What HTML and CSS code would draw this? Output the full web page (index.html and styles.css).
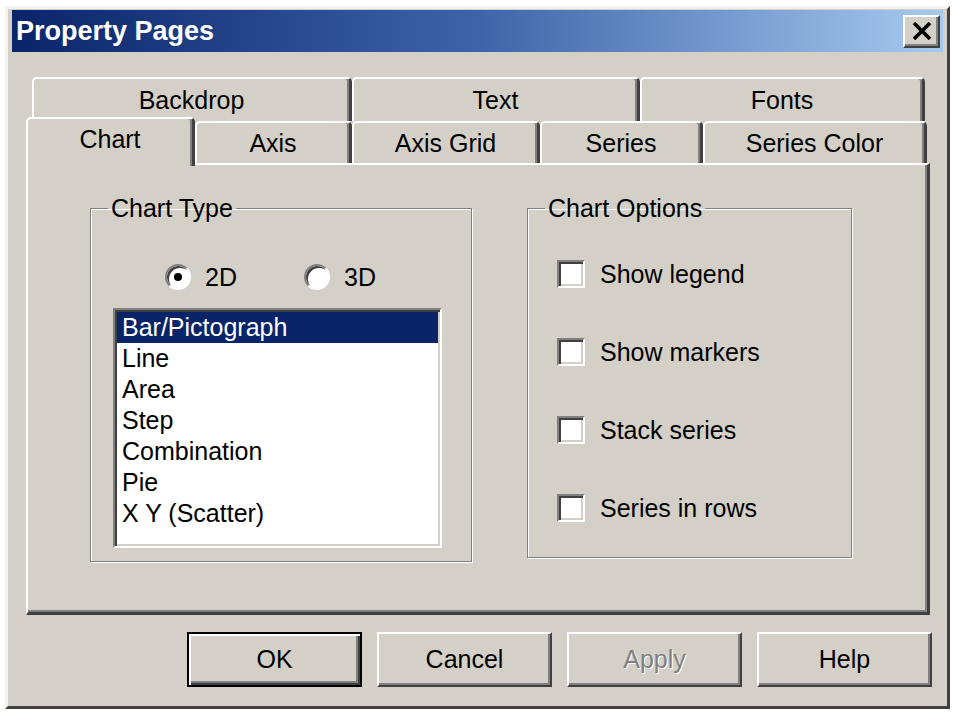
FILE: index.html
```html
<!DOCTYPE html>
<html lang="en">
<head>
    <meta charset="UTF-8">
    <title>Property Pages</title>
    <link rel="stylesheet" href="styles.css">
</head>
<body>
    <div class="window">
        <div class="titlebar">
            <span class="title">Property Pages</span>
            <button class="close" type="button">
                <svg width="20" height="18" viewBox="0 0 20 18">
                    <path d="M2 1 L18 17 M18 1 L2 17" stroke="#000" stroke-width="3.6" fill="none"/>
                </svg>
            </button>
        </div>

        <div class="tabs">
            <div class="tab-row back">
                <div class="tab w-backdrop">Backdrop</div>
                <div class="tab w-text">Text</div>
                <div class="tab w-fonts">Fonts</div>
            </div>
            <div class="tab-row front">
                <div class="tab active w-chart">Chart</div>
                <div class="tab w-axis">Axis</div>
                <div class="tab w-grid">Axis Grid</div>
                <div class="tab w-series">Series</div>
                <div class="tab w-color">Series Color</div>
            </div>
        </div>

        <div class="panel">
            <fieldset class="group group-type">
                <legend>Chart Type</legend>
                <div class="radios">
                    <label class="radio first"><span class="circle"><span class="dot"></span></span>2D</label>
                    <label class="radio"><span class="circle"></span>3D</label>
                </div>
                <div class="listbox">
                    <div class="item selected">Bar/Pictograph</div>
                    <div class="item">Line</div>
                    <div class="item">Area</div>
                    <div class="item">Step</div>
                    <div class="item">Combination</div>
                    <div class="item">Pie</div>
                    <div class="item">X Y (Scatter)</div>
                </div>
            </fieldset>

            <fieldset class="group group-options">
                <legend>Chart Options</legend>
                <div class="checks">
                    <label class="check"><span class="box"></span>Show legend</label>
                    <label class="check"><span class="box"></span>Show markers</label>
                    <label class="check"><span class="box"></span>Stack series</label>
                    <label class="check"><span class="box"></span>Series in rows</label>
                </div>
            </fieldset>
        </div>

        <div class="buttons">
            <button class="btn default" type="button">OK</button>
            <button class="btn" type="button">Cancel</button>
            <button class="btn disabled" type="button">Apply</button>
            <button class="btn" type="button">Help</button>
        </div>
    </div>
</body>
</html>
```

FILE: styles.css
```css
* {
    box-sizing: border-box;
}

body {
    margin: 0;
    background-color: #fff;
    font-family: "Liberation Sans", Arial, sans-serif;
    font-size: 25px;
    color: #000;
}

.window {
    margin: 6px 0 0 5px;
    width: 945px;
    height: 703px;
    background-color: #d4d0c8;
    border: 3px solid;
    border-color: #f4f2ee #404040 #404040 #f4f2ee;
    padding: 1px 4px 0 4px;
    display: flex;
    flex-direction: column;
}

/* title bar */
.titlebar {
    height: 42px;
    flex-shrink: 0;
    display: flex;
    align-items: center;
    justify-content: space-between;
    padding: 0 3px 0 4px;
    background: linear-gradient(to right, #0a246a 0%, #3d64a8 50%, #a6caf0 100%);
}

.title {
    color: #fff;
    font-weight: bold;
    font-size: 27px;
}

.close {
    width: 37px;
    height: 33px;
    padding: 0;
    display: flex;
    align-items: center;
    justify-content: center;
    background-color: #d4d0c8;
    border: 2px solid;
    border-color: #fff #404040 #404040 #fff;
    box-shadow: inset -2px -2px 0 #808080;
}

/* tabs */
.tabs {
    margin: 25px 0 0 14px;
}

.tab-row {
    display: flex;
    align-items: flex-end;
}

.tab-row.back {
    padding-left: 6px;
    margin-bottom: -4px;
}

.tab {
    height: 44px;
    display: flex;
    align-items: center;
    justify-content: center;
    background-color: #d4d0c8;
    border-top: 2px solid #fff;
    border-left: 2px solid #fff;
    border-right: 3px solid #404040;
    border-radius: 5px 5px 0 0;
    box-shadow: inset -2px 0 0 #808080;
}

.tab-row.front .tab {
    height: 42px;
}

.tab-row.front .tab.active {
    height: 49px;
    margin-bottom: -3px;
    padding-bottom: 6px;
    position: relative;
    z-index: 1;
}

.w-backdrop { width: 320px; }
.w-text { width: 288px; }
.w-fonts { width: 285px; }
.w-chart { width: 169px; }
.w-axis { width: 157px; }
.w-grid { width: 188px; }
.w-series { width: 163px; }
.w-color { width: 224px; }

/* page */
.panel {
    margin-left: 14px;
    width: 904px;
    height: 452px;
    flex-shrink: 0;
    display: flex;
    align-items: flex-start;
    gap: 55px;
    padding: 28px 0 0 62px;
    border-top: 2px solid #fff;
    border-left: 2px solid #fff;
    border-right: 3px solid #404040;
    border-bottom: 3px solid #404040;
    box-shadow: inset -2px -2px 0 #808080;
}

.group {
    margin: 0;
    padding: 0;
    min-width: 0;
    border: 1px solid #808080;
    box-shadow: 1px 1px 0 #fff, inset 1px 1px 0 #fff;
}

.group legend {
    margin-left: 17px;
    padding: 0 3px;
    line-height: 30px;
}

.group-type {
    width: 382px;
    height: 369px;
}

.group-options {
    width: 325px;
    height: 365px;
}

/* radios */
.radios {
    display: flex;
    align-items: center;
    height: 30px;
    margin: 39px 0 0 74px;
}

.radio {
    display: flex;
    align-items: center;
    gap: 14px;
}

.radio.first {
    width: 139px;
}

.circle {
    width: 26px;
    height: 26px;
    border-radius: 50%;
    background-color: #fff;
    border: 2px solid;
    border-color: #808080 #fff #fff #808080;
    box-shadow: inset 2px 2px 0 #404040;
    display: flex;
    align-items: center;
    justify-content: center;
}

.dot {
    width: 8px;
    height: 8px;
    border-radius: 50%;
    background-color: #000;
}

/* list */
.listbox {
    margin: 16px 0 0 22px;
    width: 329px;
    height: 240px;
    padding: 2px;
    background-color: #fff;
    border: 2px solid;
    border-color: #808080 #fff #fff #808080;
    box-shadow: inset 2px 2px 0 #404040, inset -2px -2px 0 #d4d0c8;
}

.item {
    height: 31px;
    line-height: 31px;
    padding-left: 5px;
}

.item.selected {
    background-color: #0a246a;
    color: #fff;
}

/* checkboxes */
.checks {
    display: flex;
    flex-direction: column;
    gap: 48px;
    margin: 36px 0 0 29px;
}

.check {
    display: flex;
    align-items: center;
    height: 30px;
}

.box {
    width: 28px;
    height: 28px;
    margin-right: 15px;
    background-color: #fff;
    border: 2px solid;
    border-color: #808080 #fff #fff #808080;
    box-shadow: inset 2px 2px 0 #404040, inset -2px -2px 0 #d4d0c8;
}

/* buttons */
.buttons {
    display: flex;
    justify-content: flex-end;
    gap: 15px;
    margin: 17px 11px 0 0;
}

.btn {
    width: 175px;
    height: 55px;
    padding: 0;
    background-color: #d4d0c8;
    font-family: "Liberation Sans", Arial, sans-serif;
    font-size: 25px;
    color: #000;
    border: 2px solid;
    border-color: #fff #404040 #404040 #fff;
    box-shadow: inset -2px -2px 0 #808080;
}

.btn.default {
    border-color: #000;
    box-shadow: inset 2px 2px 0 #fff, inset -2px -2px 0 #404040, inset -4px -4px 0 #808080;
}

.btn.disabled {
    color: #808080;
    text-shadow: 1px 1px 0 #fff;
}
```
